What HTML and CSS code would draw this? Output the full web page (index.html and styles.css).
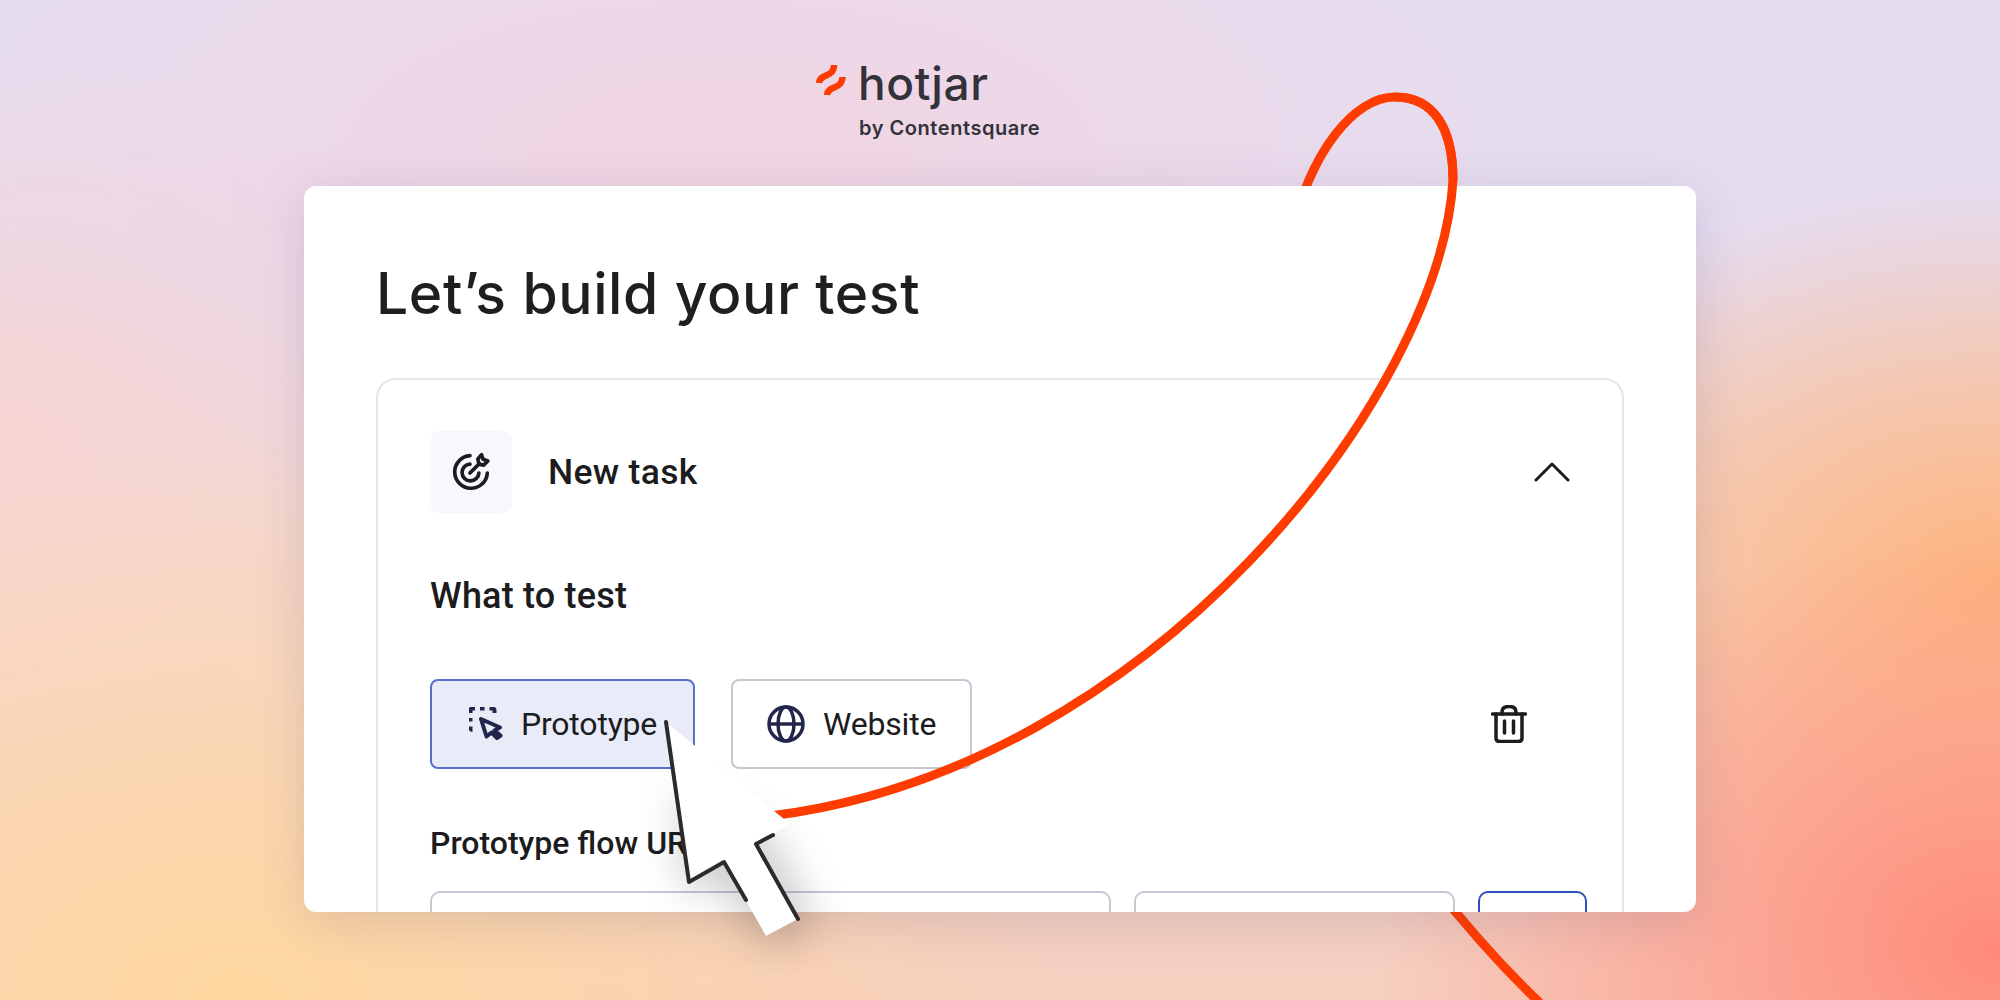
FILE: index.html
```html
<!DOCTYPE html>
<html lang="en">
<head>
<meta charset="utf-8">
<title>Hotjar by Contentsquare</title>
<link rel="stylesheet" href="styles.css">
</head>
<body>
<main class="stage">
  <svg class="curve-layer" viewBox="0 0 2000 1000" aria-hidden="true">
    <path class="curve" d="M1290 240C1310 150 1355 97 1395 97C1435 97 1453 130 1453 180"/>
    <path class="curve" d="M1430 880C1465 925 1500 965 1540 1003"/>
  </svg>
  <header class="brand">
    <svg class="brand-mark" viewBox="0 0 30 34" aria-hidden="true">
      <path d="M3 21C4 11 18 16 18 3"/>
      <path d="M11 33C12 23 26 28 26.500 15"/>
    </svg>
    <div class="brand-text">
      <div class="brand-name">hotjar</div>
      <div class="brand-sub">by Contentsquare</div>
    </div>
  </header>
  <section class="card">
    <h1 class="title">Let’s build your test</h1>
    <div class="panel">
      <div class="task-row">
        <div class="task-icon">
          <svg viewBox="0 0 38 38" aria-hidden="true">
            <path d="M18 3.500A15.500 15.500 0 1 0 34.500 20"/>
            <path d="M18 11.500A8 8 0 1 0 26.500 20"/>
            <path d="M18 20L27 11"/>
            <path d="M25.500 6.500L29 2.500L30.500 7L35 8.500L31 12.500L26.500 11.500Z"/>
          </svg>
        </div>
        <span class="task-name">New task</span>
        <svg class="chevron" viewBox="0 0 36 20" aria-hidden="true"><path d="M2 18L18 2L34 18"/></svg>
      </div>
      <h2 class="subhead">What to test</h2>
      <div class="choice-row">
        <button class="choice choice-active">
          <svg class="choice-icon icon-proto" viewBox="0 0 34 34" aria-hidden="true">
            <path d="M1.500 6V3.500Q1.500 1.500 3.500 1.500H6M11 1.500H15.500M20.500 1.500H23Q25.500 1.500 25.500 3.500V6M1.500 11V14.500M1.500 19.500V21Q1.500 23 3.500 23"/>
            <path d="M12 12L31 20.500L25.500 23.500L31.500 28.500L28 31L22.500 25.500L17.500 29.500Z"/>
          </svg>
          <span>Prototype</span>
        </button>
        <button class="choice">
          <svg class="choice-icon icon-globe" viewBox="0 0 38 38" aria-hidden="true">
            <circle cx="19" cy="19" r="17"/>
            <ellipse cx="19" cy="19" rx="8" ry="17"/>
            <path d="M2 19H36"/>
          </svg>
          <span>Website</span>
        </button>
        <svg class="trash" viewBox="0 0 36 38" aria-hidden="true">
          <path d="M1.500 9H34.500"/>
          <path d="M5 9V33Q5 36.500 8.500 36.500H27.500Q31 36.500 31 33V9"/>
          <path d="M11 9V7Q11 1.500 18 1.500Q25 1.500 25 7V9"/>
          <path d="M13.500 16V28M22.500 16V28"/>
        </svg>
      </div>
      <h3 class="field-label">Prototype flow URL</h3>
      <div class="field-row">
        <div class="field"></div>
        <div class="field"></div>
        <div class="field field-primary"></div>
      </div>
    </div>
  </section>
  <svg class="curve-layer" viewBox="0 0 2000 1000" aria-hidden="true">
    <path class="curve" d="M1395 97C1435 97 1453 130 1453 180C1440 395 1150 770 770 816"/>
    <polygon class="pointer-shadow" points="680,790 770,835 815,925 770,950 720,880 685,895"/>
    <polygon class="pointer-fill" points="666,722 790,824 756,844 798,919 766,936 724,862 689,882"/>
    <path class="pointer-line" d="M666 722L689 882L724 862L746 900M798 919L756 844L773 835"/>
  </svg>
</main>
</body>
</html>
```

FILE: styles.css
```css
* { box-sizing: border-box; }
html, body { margin: 0; padding: 0; }
body { font-family: Roboto, "Liberation Sans", sans-serif; color: #1c1c1e; }

.stage {
  position: relative;
  width: 2000px;
  height: 1000px;
  overflow: hidden;
  display: flex;
  flex-direction: column;
  align-items: center;
  background:
    radial-gradient(620px 420px at 100% 95%, #ff8a78 0%, rgba(255,138,120,0) 100%),
    radial-gradient(600px 400px at 100% 58%, #fdb47f 0%, rgba(253,180,127,0) 100%),
    radial-gradient(820px 560px at 12% 100%, #ffd8a0 0%, rgba(255,216,160,0) 100%),
    radial-gradient(800px 360px at 36% 16%, #f2d4e2 0%, rgba(242,212,226,0) 100%),
    radial-gradient(500px 400px at 0% 45%, #f7d4d2 0%, rgba(247,212,210,0) 100%),
    linear-gradient(180deg, #e6ddf0 0%, #e6dcf0 28%, #f3d9d2 55%, #f6cfc0 100%);
}

.curve-layer {
  position: absolute;
  inset: 0;
  width: 2000px;
  height: 1000px;
  pointer-events: none;
}
.curve { fill: none; stroke: #ff3c00; stroke-width: 9; }
.pointer-shadow { fill: rgba(0,0,0,.2); filter: blur(20px); }
.pointer-fill { fill: #fff; }
.pointer-line { fill: none; stroke: #2b2b2d; stroke-width: 4; stroke-linecap: round; stroke-linejoin: round; }

.brand {
  position: relative;
  width: 1392px;
  height: 186px;
  flex: none;
  padding: 62px 0 0 512px;
  display: flex;
  gap: 13px;
  align-items: flex-start;
}
.brand-mark {
  width: 30px;
  height: 34px;
  flex: none;
  fill: none;
  stroke: #ff3c00;
  stroke-width: 6.500;
}
.brand-text { color: #33323a; font-family: Inter, sans-serif; }
.brand-name { font-size: 46px; line-height: 42px; font-weight: 500; margin-left: -1px; letter-spacing: .6px; }
.brand-sub { font-size: 20px; line-height: 24px; font-weight: 600; margin-top: 12px; letter-spacing: .55px; }

.card {
  position: relative;
  width: 1392px;
  height: 726px;
  flex: none;
  padding: 73px 72px 0;
  background: #fff;
  border-radius: 12px;
  overflow: hidden;
  box-shadow: 0 10px 50px rgba(90,70,110,.18);
}
.title {
  margin: 0;
  height: 119px;
  font-family: Inter, sans-serif;
  font-size: 57px;
  line-height: 70px;
  font-weight: 500;
  letter-spacing: .6px;
  color: #1f1f21;
}
.panel {
  border: 2px solid #e6e6ea;
  border-radius: 20px;
  padding: 51px 36px 0 52px;
  height: 600px;
}
.task-row { display: flex; align-items: center; height: 82px; padding-right: 16px; }
.task-icon {
  width: 82px;
  height: 82px;
  border-radius: 10px;
  background: #f7f8fd;
  display: flex;
  align-items: center;
  justify-content: center;
}
.task-icon svg { width: 40px; height: 40px; fill: none; stroke: #1c1c1e; stroke-width: 3.500; stroke-linecap: round; stroke-linejoin: round; }
.task-name { margin-left: 36px; font-size: 35.500px; font-weight: 500; letter-spacing: .3px; }
.chevron { margin-left: auto; width: 36px; height: 20px; fill: none; stroke: #1c1c1e; stroke-width: 3; stroke-linecap: round; stroke-linejoin: round; }

.subhead { margin: 62px 0 0; font-size: 36px; line-height: 42px; font-weight: 500; letter-spacing: .2px; }
.choice-row { display: flex; align-items: center; gap: 36px; margin-top: 62px; height: 90px; }
.choice {
  height: 90px;
  padding: 0 14px 0 37px;
  display: flex;
  align-items: center;
  gap: 18px;
  background: #fff;
  border: 2px solid #c5c7d3;
  border-radius: 8px;
  font: 400 32px Roboto, sans-serif;
  letter-spacing: -.2px;
  color: #1c1c1e;
}
.choice + .choice { padding: 0 34px 0 34px; gap: 18px; }
.choice-active { width: 265px; background: #e9ebf8; border-color: #5670d0; }
.choice-icon { fill: none; stroke: #21264a; flex: none; }
.icon-proto { width: 34px; height: 34px; stroke-width: 4; stroke-linejoin: round; }
.icon-globe { width: 38px; height: 38px; stroke-width: 3.500; }
.trash { margin-left: auto; margin-right: 59px; width: 36px; height: 38px; fill: none; stroke: #1c1c1e; stroke-width: 3.500; stroke-linecap: round; stroke-linejoin: round; }

.field-label { margin: 54px 0 0; font-size: 32px; line-height: 40px; font-weight: 500; }
.field-row { display: grid; grid-template-columns: 681px 321px 109px; gap: 23px; margin-top: 28px; }
.field { height: 60px; border: 2px solid #c5c7d3; border-radius: 10px; background: #fff; }
.field-primary { border-color: #2f4fc0; }
```
